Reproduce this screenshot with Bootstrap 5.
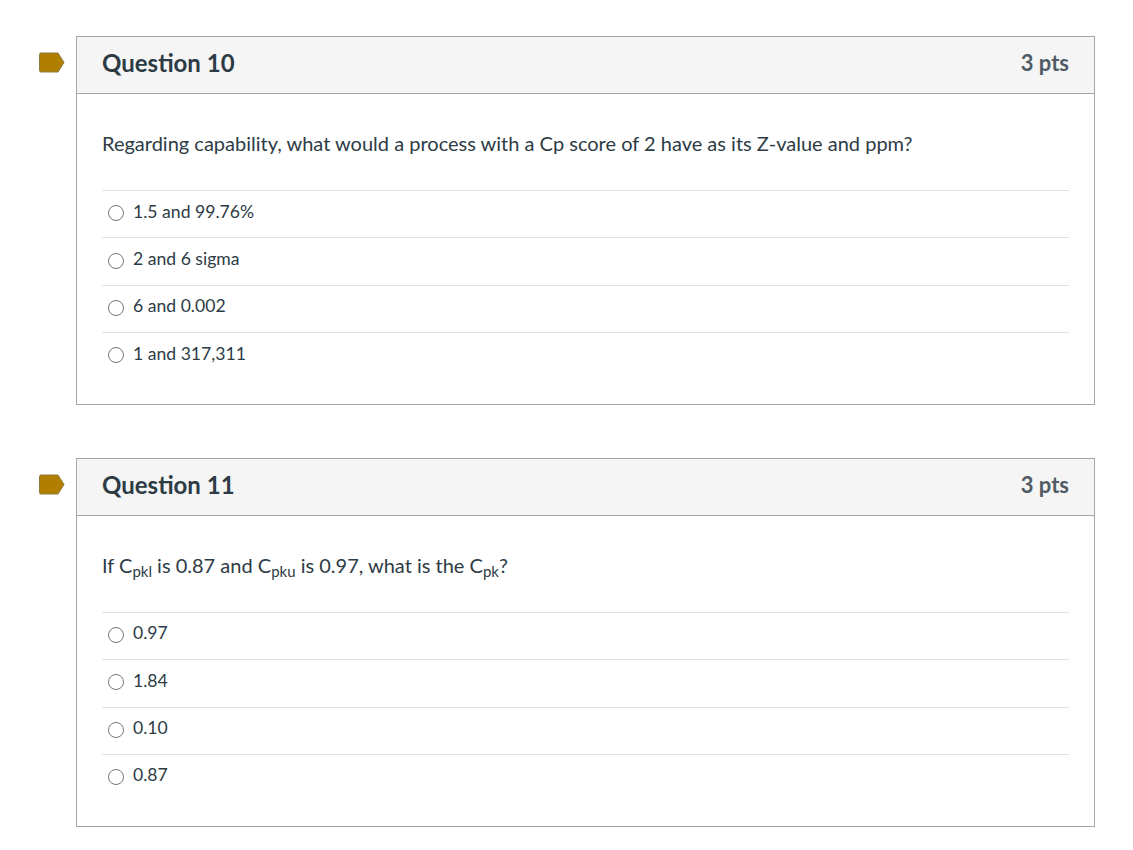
<!DOCTYPE html>
<html lang="en">
<head>
<meta charset="utf-8">
<title>Quiz</title>
<link href="https://cdn.jsdelivr.net/npm/bootstrap@5.3.0/dist/css/bootstrap.min.css" rel="stylesheet">
<style>
body { font-family: Lato, "Liberation Sans", sans-serif; color: #2d3b45; background: #fff; }
.quiz-wrap { padding: 36px 38px 0 38px; }
.quiz-item { margin-bottom: 53px; }
.flag-col { width: 38px; flex: none; padding-top: 16px; padding-left: 1px; }
.flag-col svg { display: block; }
.q-card { flex: 1 1 auto; border: 1px solid #a6a6a6; border-radius: 0; }
.q-head { background: #f5f5f5; border-bottom: 1px solid #a6a6a6; height: 57px; padding: 0 25px 3px; }
.q-title { font-size: 24px; font-weight: 700; margin: 0; line-height: 1.2; color: #2d3b45; }
.q-pts { font-size: 22px; font-weight: 700; color: #4f5c65; margin-bottom: 2px; }
.q-body { padding: 35px 25px 24.2px; }
.q-text { font-size: 20px; line-height: 28px; margin: 0 0 33px; }
.q-text sub { font-size: 15px; }
.opt-row { border-top: 1px solid #dfe1e2; height: 47.4px; gap: 9px; padding: 0 0 5px 6px; font-size: 17.6px; }
.opt-dot { width: 16px; height: 16px; border: 1.5px solid #6f787f; border-radius: 50%; flex: none; margin-top: 3px; }
</style>
</head>
<body>
<div class="quiz-wrap">
  <div class="quiz-item d-flex">
    <div class="flag-col"><svg width="26" height="21" viewBox="0 0 26 21"><path d="M.5 2.5Q.5 1 2 1H19L25 10.5L19 20H2Q.5 20 .5 18.5Z" fill="#b07f00" stroke="#8f7a3a" stroke-width="1"/></svg></div>
    <div class="q-card">
      <div class="q-head d-flex align-items-center justify-content-between">
        <h2 class="q-title">Question 10</h2><span class="q-pts">3 pts</span>
      </div>
      <div class="q-body">
        <p class="q-text">Regarding capability, what would a process with a Cp score of 2 have as its Z-value and ppm?</p>
        <div class="opt-row d-flex align-items-center"><span class="opt-dot"></span><span>1.5 and 99.76%</span></div>
        <div class="opt-row d-flex align-items-center"><span class="opt-dot"></span><span>2 and 6 sigma</span></div>
        <div class="opt-row d-flex align-items-center"><span class="opt-dot"></span><span>6 and 0.002</span></div>
        <div class="opt-row d-flex align-items-center"><span class="opt-dot"></span><span>1 and 317,311</span></div>
      </div>
    </div>
  </div>
  <div class="quiz-item d-flex">
    <div class="flag-col"><svg width="26" height="21" viewBox="0 0 26 21"><path d="M.5 2.5Q.5 1 2 1H19L25 10.5L19 20H2Q.5 20 .5 18.5Z" fill="#b07f00" stroke="#8f7a3a" stroke-width="1"/></svg></div>
    <div class="q-card">
      <div class="q-head d-flex align-items-center justify-content-between">
        <h2 class="q-title">Question 11</h2><span class="q-pts">3 pts</span>
      </div>
      <div class="q-body">
        <p class="q-text">If C<sub>pkl</sub> is 0.87 and C<sub>pku</sub> is 0.97, what is the C<sub>pk</sub>?</p>
        <div class="opt-row d-flex align-items-center"><span class="opt-dot"></span><span>0.97</span></div>
        <div class="opt-row d-flex align-items-center"><span class="opt-dot"></span><span>1.84</span></div>
        <div class="opt-row d-flex align-items-center"><span class="opt-dot"></span><span>0.10</span></div>
        <div class="opt-row d-flex align-items-center"><span class="opt-dot"></span><span>0.87</span></div>
      </div>
    </div>
  </div>
</div>
<script src="https://cdn.jsdelivr.net/npm/bootstrap@5.3.0/dist/js/bootstrap.bundle.min.js"></script>
</body>
</html>
